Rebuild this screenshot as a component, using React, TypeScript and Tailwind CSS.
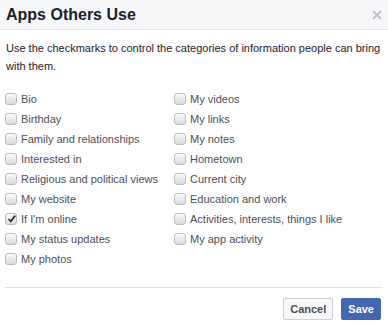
import React from "react";

const left = [
  ["Bio", false],
  ["Birthday", false],
  ["Family and relationships", false],
  ["Interested in", false],
  ["Religious and political views", false],
  ["My website", false],
  ["If I'm online", true],
  ["My status updates", false],
  ["My photos", false],
] as const;

const right = [
  "My videos",
  "My links",
  "My notes",
  "Hometown",
  "Current city",
  "Education and work",
  "Activities, interests, things I like",
  "My app activity",
];

function Box({ checked }: { checked: boolean }) {
  return (
    <span className="relative inline-block w-[12px] h-[12px] rounded-[3px] border border-[#bdbdbd] bg-gradient-to-b from-[#fafafa] to-[#dadada] shrink-0 shadow-[inset_0_1px_0_#fff]">
      {checked && (
        <svg className="absolute left-[1px] top-[0px]" width="10" height="10" viewBox="0 0 10 10">
          <path d="M1.6 5.2 L3.8 7.4 L8.2 1.6" fill="none" stroke="#333" strokeWidth="1.8" />
        </svg>
      )}
    </span>
  );
}

function Row({ label, checked }: { label: string; checked: boolean }) {
  return (
    <div className="flex items-center h-[20px]">
      <Box checked={checked} />
      <span className="ml-[4px] text-[11px] text-[#4b4f56]">{label}</span>
    </div>
  );
}

export default function App() {
  return (
    <div className="w-[388px] h-[328px] bg-white [font-family:'Liberation_Sans',Arial,sans-serif] flex flex-col">
      <div className="h-[30px] bg-[#f6f7f9] border-b border-[#e5e5e5] flex items-center justify-between pl-[6px] pr-[6px]">
        <span className="text-[16px] font-bold text-[#1d2129]">Apps Others Use</span>
        <svg width="10" height="10" viewBox="0 0 10 10">
          <path d="M1 1 L9 9 M9 1 L1 9" stroke="#bec2c9" strokeWidth="2" />
        </svg>
      </div>
      <div className="px-[6px] pt-[9px] text-[11px] leading-[18px] text-[#1d2129]">
        Use the checkmarks to control the categories of information people can bring with them.
      </div>
      <div className="grid grid-cols-[169px_1fr] pl-[5px] mt-[14px]">
        <div className="flex flex-col">
          {left.map(([l, c]) => (
            <Row key={l} label={l} checked={c} />
          ))}
        </div>
        <div className="flex flex-col">
          {right.map((l) => (
            <Row key={l} label={l} checked={false} />
          ))}
        </div>
      </div>
      <div className="mx-[5px] mt-[18px] border-t border-[#dddfe2]" />
      <div className="flex justify-end gap-[8px] pr-[7px] pt-[10px]">
        <button className="h-[22px] px-[6px] border border-[#ced0d4] bg-[#f6f7f9] rounded-[2px] text-[11px] font-bold text-[#4b4f56]">
          Cancel
        </button>
        <button className="h-[22px] px-[6px] border border-[#4267b2] bg-[#4267b2] rounded-[2px] text-[11px] font-bold text-white">
          Save
        </button>
      </div>
    </div>
  );
}
